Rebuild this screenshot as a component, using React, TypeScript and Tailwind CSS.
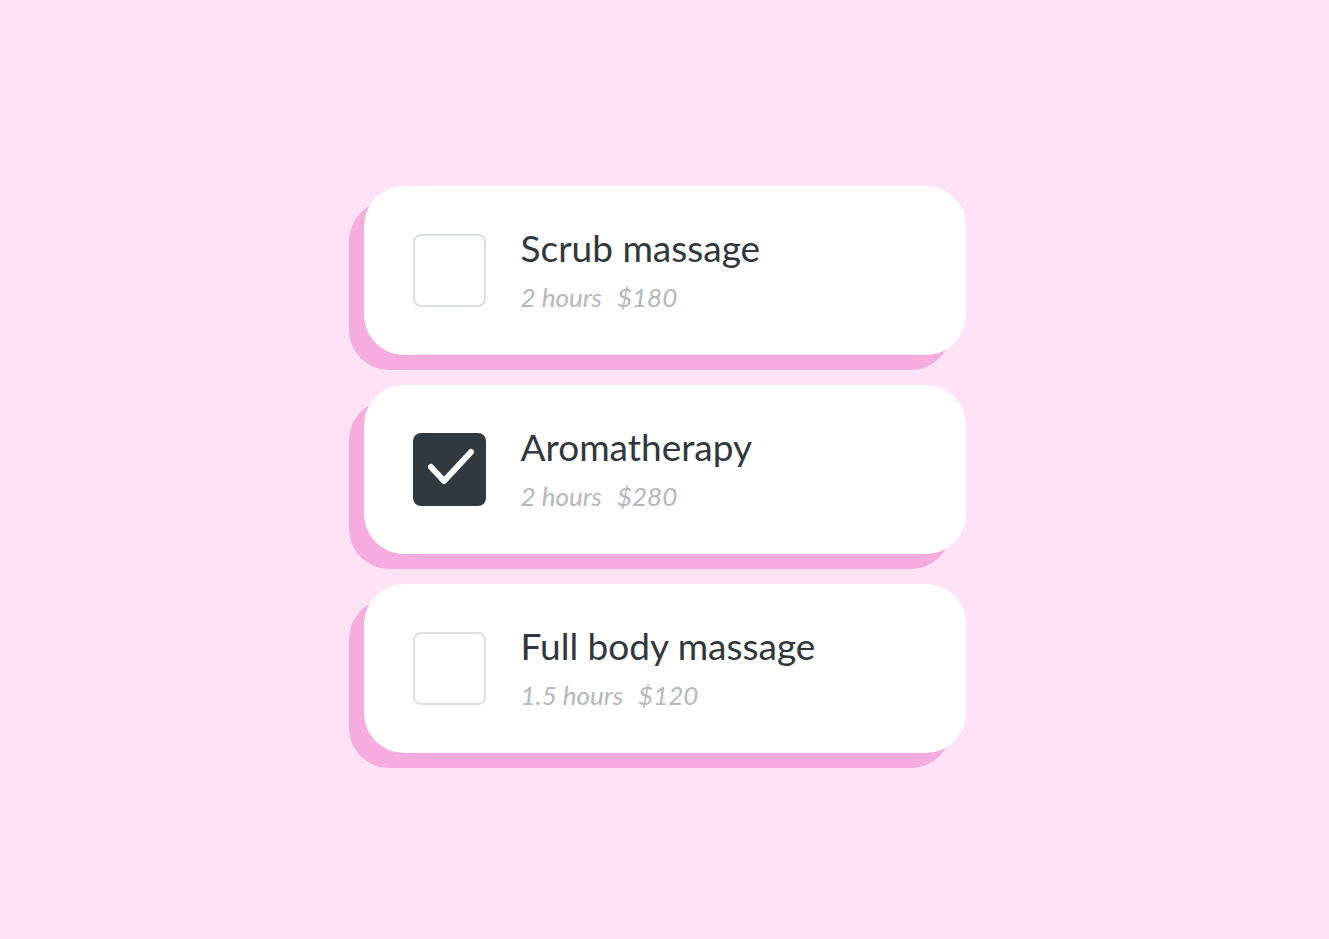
import React from "react";

type Service = {
  name: string;
  duration: string;
  price: string;
  checked: boolean;
};

const services: Service[] = [
  { name: "Scrub massage", duration: "2 hours", price: "$180", checked: false },
  { name: "Aromatherapy", duration: "2 hours", price: "$280", checked: true },
  { name: "Full body massage", duration: "1.5 hours", price: "$120", checked: false },
];

function Checkbox({ checked }: { checked: boolean }) {
  if (checked) {
    return (
      <div className="flex h-[73px] w-[73px] shrink-0 items-center justify-center rounded-[8px] bg-[#32393e]">
        <svg width="73" height="73" viewBox="0 0 73 73" fill="none">
          <path
            d="M18 34 L31 48 L58 19"
            stroke="#ffffff"
            strokeWidth="6"
            strokeLinecap="round"
            strokeLinejoin="round"
          />
        </svg>
      </div>
    );
  }
  return <div className="h-[73px] w-[73px] shrink-0 rounded-[8px] border-2 border-[#dcdfe1] bg-white" />;
}

function ServiceCard({ service }: { service: Service }) {
  return (
    <div className="flex h-[169px] w-[602px] items-center rounded-[40px] bg-white pl-[49px] shadow-[-15px_15px_0_0_#f6acdf]">
      <Checkbox checked={service.checked} />
      <div className="mb-[2px] ml-[35px] flex flex-col">
        <div className="text-[37px] leading-[44px] text-[#30383d]">{service.name}</div>
        <div className="mt-[11px] flex gap-[15px] text-[26px] italic leading-[32px] text-[#b3b8bb]">
          <span>{service.duration}</span>
          <span>{service.price}</span>
        </div>
      </div>
    </div>
  );
}

export default function App() {
  return (
    <div
      className="flex min-h-screen flex-col items-center justify-center gap-[30px] bg-[#fde3f5]"
      style={{ fontFamily: "Lato, 'Noto Sans', sans-serif" }}
    >
      {services.map((s) => (
        <ServiceCard key={s.name} service={s} />
      ))}
    </div>
  );
}
